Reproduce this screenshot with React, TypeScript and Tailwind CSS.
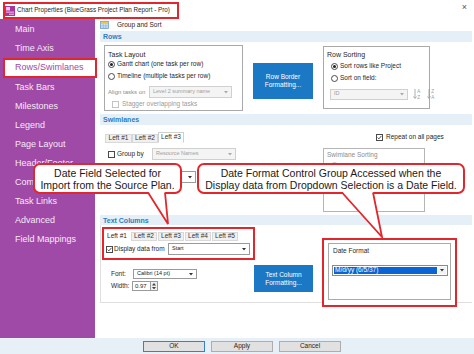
import React from 'react';

const menu = [
  'Main',
  'Time Axis',
  'Rows/Swimlanes',
  'Task Bars',
  'Milestones',
  'Legend',
  'Page Layout',
  'Header/Footer',
  'Comments',
  'Task Links',
  'Advanced',
  'Field Mappings',
];

function AppIcon() {
  return (
    <svg width="10" height="10" viewBox="0 0 10 10" className="shrink-0">
      <rect x="0" y="0" width="10" height="10" fill="#a8379c" />
      <rect x="1" y="1" width="4" height="3.5" fill="#f2c4ea" />
      <rect x="1" y="5.5" width="8" height="1.3" fill="#e9a3de" />
      <rect x="4" y="7.6" width="5" height="1.3" fill="#e9a3de" />
    </svg>
  );
}

function GridIcon() {
  return (
    <svg width="9" height="8" viewBox="0 0 9 8" className="shrink-0">
      <rect x="0.5" y="0.5" width="8" height="7" fill="#d6e8f7" stroke="#6d9fd0" strokeWidth="0.8" />
      <rect x="0.9" y="0.9" width="7.2" height="2" fill="#f2c440" />
      <path d="M0.8 4.3H8.2M0.8 6H8.2M3.3 3V7.4M5.8 3V7.4" stroke="#7aa8d6" strokeWidth="0.5" />
    </svg>
  );
}

function Radio({ on, dim }: { on?: boolean; dim?: boolean }) {
  return (
    <span
      className={`flex h-[7px] w-[7px] shrink-0 items-center justify-center rounded-full border bg-white ${
        dim ? 'border-[#bdbdbd]' : 'border-[#4a4a4a]'
      }`}
    >
      {on && <span className="h-[3px] w-[3px] rounded-full bg-[#1f1f1f]" />}
    </span>
  );
}

function Check({ on, dim }: { on?: boolean; dim?: boolean }) {
  return (
    <span
      className={`flex h-[7px] w-[7px] shrink-0 items-center justify-center border bg-white ${
        dim ? 'border-[#c4c4c4]' : 'border-[#4a4a4a]'
      }`}
    >
      {on && (
        <svg width="5" height="5" viewBox="0 0 5 5">
          <path d="M0.6 2.6 1.9 3.9 4.4 0.9" fill="none" stroke="#222" strokeWidth="0.8" />
        </svg>
      )}
    </span>
  );
}

function Arrow({ color = '#333' }: { color?: string }) {
  return (
    <svg width="4" height="3" viewBox="0 0 4 3" className="shrink-0">
      <path d="M0 0H4L2 2.6Z" fill={color} />
    </svg>
  );
}

function Select({ text, className, dim }: { text: string; className: string; dim?: boolean }) {
  return (
    <div
      className={`flex shrink-0 items-center border ${
        dim ? 'border-[#d0d0d0] bg-[#f4f4f4] text-[#a0a0a0]' : 'border-[#9a9a9a] bg-white text-[#222]'
      } ${className}`}
    >
      <span className="flex-1 truncate pl-[3px] text-[5.5px] leading-none">{text}</span>
      <span className="mr-[3px] flex items-center">
        <Arrow color={dim ? '#aaa' : '#333'} />
      </span>
    </div>
  );
}

function SortIcon({ reverse }: { reverse?: boolean }) {
  return (
    <svg width="9" height="12" viewBox="0 0 9 12" className="ml-[5px] shrink-0">
      <path d="M2 1V10M0.5 8.5 2 10.5 3.5 8.5" fill="none" stroke="#9a9a9a" strokeWidth="0.8" />
      <text x="4.3" y="5" fontSize="4.6" fill="#9a9a9a" fontFamily="Liberation Sans, Arial, sans-serif">
        {reverse ? 'Z' : 'A'}
      </text>
      <text x="4.3" y="10.5" fontSize="4.6" fill="#9a9a9a" fontFamily="Liberation Sans, Arial, sans-serif">
        {reverse ? 'A' : 'Z'}
      </text>
    </svg>
  );
}

function Band({ children }: { children: React.ReactNode }) {
  return (
    <div className="flex h-[11px] shrink-0 items-center bg-[#e5eff7] pl-[3px] text-[7px] font-bold leading-none text-[#2f7cc0]">
      {children}
    </div>
  );
}

function Tab({ label, active, w }: { label: string; active?: boolean; w: string }) {
  return (
    <div
      className={`flex items-center justify-center border text-[6.5px] leading-none text-[#333] ${
        active ? 'h-[11px] border-[#cfcfcf] border-b-white bg-white' : 'h-[9px] border-[#d8d8d8] bg-[#f0f0f0]'
      } ${w}`}
    >
      {label}
    </div>
  );
}

function BlueButton({ lines, className }: { lines: string[]; className: string }) {
  return (
    <div
      className={`flex shrink-0 flex-col items-center justify-center bg-[#1b78c4] text-center text-[6.5px] leading-[8px] text-white ${className}`}
    >
      {lines.map((l) => (
        <span key={l}>{l}</span>
      ))}
    </div>
  );
}

function Callout({ lines, className }: { lines: string[]; className: string }) {
  return (
    <div
      className={`absolute flex flex-col items-center justify-center rounded-[7px] border-2 border-[#e3262b] bg-white text-center text-[10.5px] leading-[12px] text-[#1a1a1a] ${className}`}
    >
      {lines.map((l) => (
        <span key={l} className="whitespace-nowrap">
          {l}
        </span>
      ))}
    </div>
  );
}

export default function App() {
  return (
    <div className="relative flex h-[354px] w-[474px] flex-col overflow-hidden bg-white font-['Liberation_Sans',Arial,sans-serif] text-[#1f1f1f]">
      {/* title bar */}
      <div className="flex h-[19px] shrink-0 items-start justify-between">
        <div className="ml-[3px] mt-[2px] flex h-[17px] w-[176px] items-center border-2 border-[#e3262b]">
          <AppIcon />
          <span className="ml-[2px] whitespace-nowrap text-[6.3px] leading-none">
            Chart Properties (BlueGrass Project Plan Report - Pro)
          </span>
        </div>
        <span className="mr-[7px] mt-[3px] text-[9px] leading-none text-[#555]">×</span>
      </div>

      <div className="flex h-[319px] shrink-0">
        <nav className="w-[95px] shrink-0 bg-[#a04aa8] pt-[1px]">
          {menu.map((m) =>
            m === 'Rows/Swimlanes' ? (
              <div
                key={m}
                className="ml-[3px] flex h-[20px] w-[94px] items-center border-2 border-[#e3262b] bg-white pl-[10px] text-[9px] text-[#a04aa8]"
              >
                {m}
              </div>
            ) : (
              <div key={m} className="flex h-[19px] items-center pl-[15px] text-[9px] text-[#f6e8f6]">
                {m}
              </div>
            ),
          )}
        </nav>

        <main className="flex min-w-0 flex-1 flex-col pl-[5px] pr-[2px]">
          <div className="flex h-[12px] shrink-0 items-center">
            <GridIcon />
            <span className="ml-[8px] text-[6.5px] leading-none">Group and Sort</span>
          </div>

          <Band>Rows</Band>
          <div className="flex h-[72px] shrink-0 items-start">
            <div className="ml-[4px] mt-[3px] flex h-[66px] w-[139px] shrink-0 flex-col border border-[#a9a9a9] px-[3px] pt-[3px]">
              <div className="flex h-[10px] items-center text-[7px] leading-none">Task Layout</div>
              <div className="flex h-[11px] items-center gap-[2px] text-[6.5px] leading-none">
                <Radio on />
                Gantt chart (one task per row)
              </div>
              <div className="flex h-[12px] items-center gap-[2px] text-[6.5px] leading-none">
                <Radio />
                Timeline (multiple tasks per row)
              </div>
              <div className="mt-[4px] flex h-[12px] items-center">
                <span className="w-[41px] shrink-0 text-[6px] leading-none text-[#8c8c8c]">Align tasks on</span>
                <Select dim text="Level 2 summary name" className="h-[12px] w-[83px]" />
              </div>
              <div className="flex h-[12px] items-center gap-[3px] pl-[4px] text-[6.5px] leading-none text-[#9a9a9a]">
                <Check dim />
                Stagger overlapping tasks
              </div>
            </div>

            <BlueButton lines={['Row Border', 'Formatting...']} className="ml-[10px] mt-[21px] h-[36px] w-[60px]" />

            <div className="ml-[10px] mt-[4px] h-[63px] w-[107px] shrink-0 border border-[#a9a9a9] px-[3px] pt-[2px]">
              <div className="flex h-[10px] items-center text-[7px] leading-none">Row Sorting</div>
              <div className="mt-[1px] flex h-[12px] items-center gap-[2px] pl-[4px] text-[6.5px] leading-none">
                <Radio on />
                Sort rows like Project
              </div>
              <div className="flex h-[12px] items-center gap-[2px] pl-[4px] text-[6.5px] leading-none">
                <Radio />
                Sort on field:
              </div>
              <div className="ml-[3px] mt-[4px] flex items-center">
                <Select dim text="ID" className="h-[11px] w-[78px]" />
                <SortIcon />
                <SortIcon reverse />
              </div>
            </div>
          </div>

          <Band>Swimlanes</Band>
          <div className="flex h-[90px] shrink-0">
            <div className="flex w-[223px] shrink-0 flex-col">
              <div className="ml-[5px] mt-[7px] flex h-[11px] items-end">
                <Tab label="Left #1" w="w-[27px]" />
                <Tab label="Left #2" w="w-[26px]" />
                <Tab label="Left #3" w="w-[26px]" active />
              </div>
              <div className="ml-[4px] mt-[5px] flex h-[12px] items-center pl-[4px]">
                <Check />
                <span className="ml-[2px] w-[35px] shrink-0 text-[6.5px] leading-none">Group by</span>
                <Select dim text="Resource Names" className="h-[12px] w-[84px]" />
              </div>
              <div className="ml-[52px] mt-[11px]">
                <Select text="" className="h-[12px] w-[44px]" />
              </div>
            </div>
            <div className="flex min-w-0 flex-1 flex-col">
              <div className="mt-[9px] flex h-[7px] items-center gap-[3px] pl-[53px] text-[6.5px] leading-none">
                <Check on />
                Repeat on all pages
              </div>
              <div className="mt-[7px] h-[64px] w-[102px] border border-[#b5b5b5] px-[3px] pt-[2px]">
                <div className="flex h-[9px] items-center text-[6.5px] leading-none text-[#8c8c8c]">Swimlane Sorting</div>
                <div className="flex h-[10px] items-center gap-[2px] pl-[4px] text-[6px] leading-none text-[#a0a0a0]">
                  <Radio on dim />
                  Sort swimlanes like Project
                </div>
              </div>
            </div>
          </div>

          <div className="flex h-[10px] shrink-0 items-center bg-[#e5eff7] pl-[3px] text-[7px] font-bold leading-none text-[#2f7cc0]">
            Text Columns
          </div>
          <div className="flex h-[78px] shrink-0 items-start border-b border-l border-[#e0e0e0]">
            <div className="flex w-[153px] shrink-0 flex-col">
              <div className="ml-[1px] mt-[2px] h-[33px] w-[153px] border-2 border-[#e3262b]">
                <div className="flex h-[12px] items-end gap-[1px] pt-[1px]">
                  <div className="flex h-[10px] w-[26px] items-center justify-center text-[6.5px] leading-none">Left #1</div>
                  <Tab label="Left #2" w="w-[26px]" />
                  <Tab label="Left #3" w="w-[26px]" />
                  <Tab label="Left #4" w="w-[26px]" />
                  <Tab label="Left #5" w="w-[26px]" />
                </div>
                <div className="mt-[2px] flex h-[12px] items-center pl-[2px]">
                  <Check on />
                  <span className="ml-[1px] w-[54px] shrink-0 text-[6.5px] leading-none">Display data from</span>
                  <Select text="Start" className="h-[12px] w-[82px]" />
                </div>
              </div>
              <div className="mt-[9px] flex h-[10px] items-center pl-[10px]">
                <span className="w-[22px] shrink-0 text-[6.5px] leading-none">Font:</span>
                <Select text="Calibri (14 pt)" className="h-[10px] w-[64px]" />
              </div>
              <div className="mt-[2px] flex h-[10px] items-center pl-[10px]">
                <span className="w-[21px] shrink-0 text-[6.5px] leading-none">Width:</span>
                <div className="flex h-[10px] w-[19px] items-center border border-[#9a9a9a] pl-[2px] text-[6px] leading-none">
                  0.97
                </div>
                <div className="flex h-[10px] w-[7px] flex-col items-center justify-center gap-[1px] border border-l-0 border-[#9a9a9a] bg-[#f0f0f0]">
                  <svg width="4" height="2.5" viewBox="0 0 4 2.5">
                    <path d="M0 2.5H4L2 0Z" fill="#444" />
                  </svg>
                  <svg width="4" height="2.5" viewBox="0 0 4 2.5">
                    <path d="M0 0H4L2 2.5Z" fill="#444" />
                  </svg>
                </div>
              </div>
            </div>

            <BlueButton lines={['Text Column', 'Formatting...']} className="mt-[40px] h-[27px] w-[59px]" />

            <div className="ml-[9px] mt-[13px] h-[69px] w-[135px] shrink-0 border-2 border-[#e3262b] bg-white">
              <div className="ml-[4px] mt-[3px] h-[57px] w-[123px] border border-[#ababab]">
                <div className="flex h-[10px] items-center pl-[4px] pt-[4px] text-[6.5px] leading-none">Date Format</div>
                <div className="ml-[3px] mt-[11px] flex h-[11px] w-[116px] items-stretch border border-[#8a8a8a] bg-white p-[1px]">
                  <span className="flex flex-1 items-center bg-[#0b64d4] pl-[1px] text-[6.5px] leading-none text-white">
                    M/d/yy (6/5/37)
                  </span>
                  <span className="ml-[1px] flex w-[8px] items-center justify-center bg-[#f2f2f2]">
                    <Arrow />
                  </span>
                </div>
              </div>
            </div>
          </div>
        </main>
      </div>

      <footer className="flex h-[16px] shrink-0 items-center gap-[6px] bg-[#e7f0f6] pl-[143px]">
        <div className="flex h-[11px] w-[62px] items-center justify-center border border-[#3a7fcf] bg-[#e1e1e1] text-[6.5px] leading-none">
          OK
        </div>
        <div className="flex h-[11px] w-[62px] items-center justify-center border border-[#adadad] bg-[#e1e1e1] text-[6.5px] leading-none">
          Apply
        </div>
        <div className="flex h-[11px] w-[62px] items-center justify-center border border-[#adadad] bg-[#e1e1e1] text-[6.5px] leading-none">
          Cancel
        </div>
      </footer>

      {/* annotation callouts */}
      <Callout
        lines={['Date Field Selected for', 'Import from the Source Plan.']}
        className="left-[33px] top-[163px] h-[31px] w-[149px]"
      />
      <Callout
        lines={['Date Format Control Group Accessed when the', 'Display data from Dropdown Selection is a Date Field.']}
        className="left-[197px] top-[163px] h-[31px] w-[268px]"
      />
      <svg className="pointer-events-none absolute left-0 top-0" width="474" height="354" viewBox="0 0 474 354">
        <polygon points="148,191.5 168,224 165,191.5" fill="white" />
        <polyline points="148,192.5 168,224 165,192.5" fill="none" stroke="#e3262b" strokeWidth="1.8" />
        <polygon points="342,191.5 382,237 373,191.5" fill="white" />
        <polyline points="342,192.5 382,237 373,192.5" fill="none" stroke="#e3262b" strokeWidth="1.8" />
      </svg>
    </div>
  );
}
